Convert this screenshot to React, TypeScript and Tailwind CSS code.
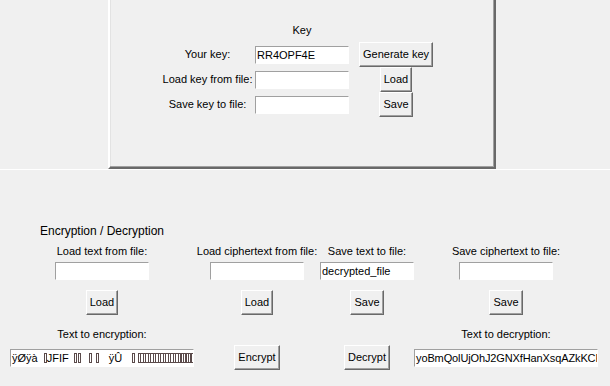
import React from 'react';

const Btn: React.FC<{ children: React.ReactNode }> = ({ children }) => (
  <button className="h-[25px] px-[3px] bg-[#f0f0f0] border border-t-white border-l-white border-r-[#696969] border-b-[#696969] shadow-[inset_-1px_-1px_0_#a0a0a0] text-[11px] leading-[13px] text-black">
    {children}
  </button>
);

const Entry: React.FC<{ children?: React.ReactNode; className?: string }> = ({ children, className = 'w-[94px]' }) => (
  <div
    className={`h-[18px] bg-white border border-t-[#a0a0a0] border-l-[#a0a0a0] border-r-white border-b-white pl-[1px] text-[11px] leading-[16px] text-black whitespace-nowrap overflow-hidden ${className}`}
  >
    {children}
  </div>
);

const Tofu: React.FC<{ className?: string }> = ({ className = '' }) => (
  <span className={`inline-block w-[3px] h-[10px] border border-[#5a4a4a] align-[-1px] ${className}`} />
);

const Row: React.FC<{ children: React.ReactNode; className?: string }> = ({ children, className = '' }) => (
  <div className={`grid grid-cols-[184px_126px_94px_184px] pl-[10px] justify-items-center items-center ${className}`}>
    {children}
  </div>
);

export default function App() {
  return (
    <div className="w-[610px] h-[386px] bg-[#f0f0f0] text-black text-[11px] font-['Liberation_Sans',Arial,sans-serif] overflow-hidden">
      {/* key panel */}
      <div className="h-[170px] border-b border-white">
        <div className="ml-[108px] w-[388px] h-[169px] border-l-2 border-r-2 border-b-2 border-l-white border-r-[#696969] border-b-[#696969] shadow-[inset_-1px_-1px_0_#a0a0a0,inset_1px_0_0_#e3e3e3] pt-[24px] pl-[52px]">
          <div className="grid grid-cols-[91px_98px_90px] grid-rows-[18px_25px_25px_25px] items-center justify-items-center">
            <div />
            <div className="self-start leading-[13px]">Key</div>
            <div />

            <div>Your key:</div>
            <Entry>RR4OPF4E</Entry>
            <Btn>Generate key</Btn>

            <div className="whitespace-nowrap">Load key from file:</div>
            <Entry />
            <Btn>Load</Btn>

            <div className="whitespace-nowrap">Save key to file:</div>
            <Entry />
            <Btn>Save</Btn>
          </div>
        </div>
      </div>

      {/* encryption / decryption */}
      <div className="pl-[10px] mt-[54px]">
        <div className="w-[184px] text-center text-[12px] leading-[14px]">Encryption / Decryption</div>
      </div>

      <Row className="mt-[7px] h-[13px] leading-[13px] whitespace-nowrap">
        <div>Load text from file:</div>
        <div>Load ciphertext from file:</div>
        <div>Save text to file:</div>
        <div>Save ciphertext to file:</div>
      </Row>

      <Row className="mt-[4px]">
        <Entry />
        <Entry />
        <Entry>decrypted_file</Entry>
        <Entry />
      </Row>

      <Row className="mt-[10px]">
        <Btn>Load</Btn>
        <Btn>Load</Btn>
        <Btn>Save</Btn>
        <Btn>Save</Btn>
      </Row>

      <Row className="mt-[13px] h-[13px] leading-[13px] whitespace-nowrap">
        <div>Text to encryption:</div>
        <div />
        <div />
        <div>Text to decryption:</div>
      </Row>

      <Row className="mt-[4px] h-[25px]">
        <Entry className="w-[184px] justify-self-start">
          ÿØÿà
          <Tofu className="ml-[6px]" />
          JFIF
          <Tofu className="ml-[5px]" />
          <Tofu className="ml-[1px]" />
          <Tofu className="ml-[8px]" />
          <Tofu className="ml-[4px]" />
          <span className="ml-[10px]">ÿÛ</span>
          <Tofu className="ml-[10px]" />
          <span className="inline-block ml-[3px] w-[80px] h-[10px] align-[-1px] border-y border-[#5a4a4a] bg-[repeating-linear-gradient(90deg,#5a4a4a_0px,#5a4a4a_1px,transparent_1px,transparent_2.5px)]" />
        </Entry>
        <Btn>Encrypt</Btn>
        <Btn>Decrypt</Btn>
        <Entry className="w-[184px] tracking-[-0.12px]">yoBmQolUjOhJ2GNXfHanXsqAZkKCF</Entry>
      </Row>
    </div>
  );
}
